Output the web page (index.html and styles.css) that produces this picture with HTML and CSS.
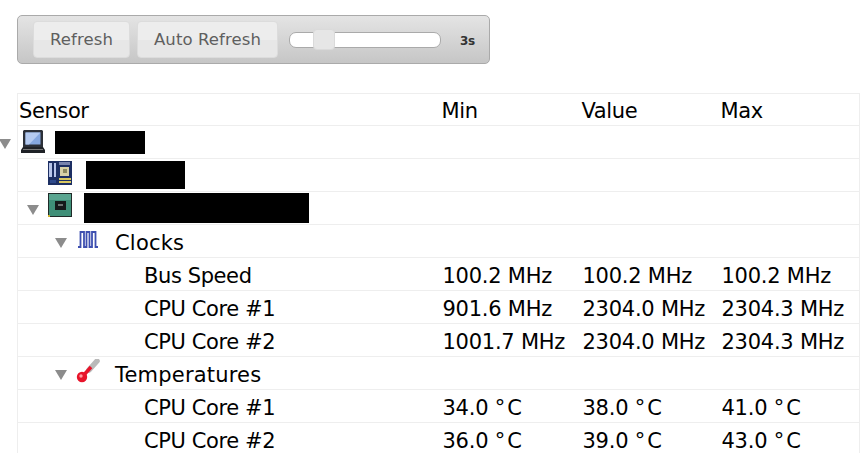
FILE: index.html
```html
<!DOCTYPE html>
<html lang="en">
<head>
<meta charset="utf-8">
<title>Sensors</title>
<link rel="stylesheet" href="styles.css">
</head>
<body>
<div class="toolbar">
  <button class="btn btn-refresh">Refresh</button>
  <button class="btn btn-auto">Auto Refresh</button>
  <div class="slider"><span class="handle"></span></div>
  <span class="interval">3s</span>
</div>
<table class="sensors">
  <colgroup><col class="c-name"><col class="c-min"><col class="c-val"><col class="c-max"></colgroup>
  <thead>
    <tr><th>Sensor</th><th>Min</th><th>Value</th><th>Max</th></tr>
  </thead>
  <tbody>
    <tr><td class="tree" colspan="4"><div class="node l0">
      <svg class="tri" viewBox="0 0 12 10"><path d="M0 0H12L6 10Z"/></svg>
      <svg class="ico laptop" viewBox="0 0 24 24"><path d="M3 0h18l1 1v16H2V1z" fill="#2c3038"/><path d="M4.500 2.500h15v12h-15z" fill="#86a8e0"/><path d="M4.500 2.500h15L8 14.500H4.500z" fill="#b4caf0"/><path d="M2 17h20l2 3v3H0v-3z" fill="#1f2227"/><path d="M2 19h20v1H2z" fill="#7a7a7a"/></svg>
      <span class="redact r1"></span>
    </div></td></tr>
    <tr><td class="tree" colspan="4"><div class="node l1">
      <svg class="ico board" viewBox="0 0 24 24"><path d="M0 0h24v24H0z" fill="#1d2f63"/><path d="M1 2h3v14H1zM6 2h2v14H6z" fill="#b9c6ea"/><path d="M11 1h11v3H11z" fill="#7884ad"/><path d="M12 6h9v9h-9z" fill="#d8d2a8"/><path d="M15 8h4v4h-4z" fill="#8d8a60"/><path d="M11 17h12v2H11zM11 20h12v2H11z" fill="#d9c860"/><path d="M2 19h6v3H2z" fill="#2e4a8c"/></svg>
      <span class="redact r2"></span>
    </div></td></tr>
    <tr><td class="tree" colspan="4"><div class="node l1b">
      <svg class="tri" viewBox="0 0 12 10"><path d="M0 0H12L6 10Z"/></svg>
      <svg class="ico chip" viewBox="0 0 24 24"><path d="M0 0h24v24H0z" fill="#1f2a28"/><path d="M1 1h22v22H1z" fill="#3f8f78"/><path d="M1 1h22v6H1z" fill="#5aa590"/><path d="M7 8h11v9H7z" fill="#15191a"/><path d="M10 11h5v2h-5z" fill="#6b7270"/><path d="M0 22h2v2H0z" fill="#c8b030"/></svg>
      <span class="redact r3"></span>
    </div></td></tr>
    <tr><td class="tree" colspan="4"><div class="node l2">
      <svg class="tri" viewBox="0 0 12 10"><path d="M0 0H12L6 10Z"/></svg>
      <svg class="ico wave" viewBox="0 0 20 18"><path d="M0 16.500H2.500V1.500H6V16.500H8.500V1.500H11.500V16.500H14V1.500H17.500V16.500H20" fill="none" stroke="#3d4fb0" stroke-width="1.800"/></svg>
      <span class="label">Clocks</span>
    </div></td></tr>
    <tr><td class="leaf">Bus Speed</td><td>100.2 MHz</td><td>100.2 MHz</td><td>100.2 MHz</td></tr>
    <tr><td class="leaf">CPU Core #1</td><td>901.6 MHz</td><td>2304.0 MHz</td><td>2304.3 MHz</td></tr>
    <tr><td class="leaf">CPU Core #2</td><td>1001.7 MHz</td><td>2304.0 MHz</td><td>2304.3 MHz</td></tr>
    <tr><td class="tree" colspan="4"><div class="node l2">
      <svg class="tri" viewBox="0 0 12 10"><path d="M0 0H12L6 10Z"/></svg>
      <svg class="ico therm" viewBox="0 0 24 24"><path d="M13 11L21 2" stroke="#b9b9b9" stroke-width="5.500" stroke-linecap="round"/><path d="M7 17L15 8" stroke="#e8142a" stroke-width="3.500"/><circle cx="6" cy="18" r="5.200" fill="#e8142a"/><circle cx="5" cy="17" r="1.700" fill="#ff9aa0"/></svg>
      <span class="label">Temperatures</span>
    </div></td></tr>
    <tr><td class="leaf">CPU Core #1</td><td>34.0 <span class="deg">°</span>C</td><td>38.0 <span class="deg">°</span>C</td><td>41.0 <span class="deg">°</span>C</td></tr>
    <tr><td class="leaf">CPU Core #2</td><td>36.0 <span class="deg">°</span>C</td><td>39.0 <span class="deg">°</span>C</td><td>43.0 <span class="deg">°</span>C</td></tr>
  </tbody>
</table>
</body>
</html>
```

FILE: styles.css
```css
html, body { margin: 0; height: 453px; overflow: hidden; background: #fff; }
body { padding: 15px 0 0 17px; box-sizing: border-box; font-family: "DejaVu Sans", sans-serif; }

.toolbar {
  width: 473px; height: 49px; box-sizing: border-box;
  display: flex; align-items: center;
  padding-left: 15px;
  border: 1px solid #aaa; border-radius: 5px;
  background: linear-gradient(#e4e4e4, #c6c6c6);
}
.btn {
  height: 37px; padding: 0; margin-right: 7px;
  border: 1px solid #dcdcdc; border-radius: 4px;
  background: linear-gradient(#ededed 50%, #e7e7e7 50%);
  color: #5f5f5f; font: 16.5px "DejaVu Sans", sans-serif; letter-spacing: .1px;
}
.btn-refresh { width: 97px; }
.btn-auto { width: 141px; }
.slider {
  width: 152px; height: 16px; margin-left: 4px; box-sizing: border-box;
  display: flex; align-items: center; padding-left: 23px;
  border: 1px solid #aaa; border-radius: 7px; background: #fff;
}
.handle {
  width: 22px; height: 21px; flex: none; box-sizing: border-box;
  border: 1px solid #dadada; border-radius: 4px; background: #e6e6e6;
}
.interval { margin-left: 19px; margin-top: 3px; font-size: 12px; font-weight: bold; color: #333; letter-spacing: -.3px; }

.sensors {
  width: 842px; margin-top: 29px; table-layout: fixed;
  border-collapse: collapse; border: 1px solid #eee;
  font-size: 21px; color: #000; letter-spacing: -.25px;
}
.c-name { width: 423px; } .c-min { width: 140px; } .c-val { width: 139px; } .c-max { width: 140px; }
tr { height: 33px; border-bottom: 1px solid #eee; }
thead tr { height: 32px; }
th { font-weight: normal; text-align: left; padding: 2px 0 0 1px; letter-spacing: -.4px; }
td { padding: 3px 0 0 2px; white-space: nowrap; }
td.leaf { padding-left: 126px; letter-spacing: -.4px; }
td.tree { padding: 0; }
.deg { letter-spacing: 2px; }

.node { display: flex; align-items: center; height: 32px; }
.l0 { margin-left: -17px; }
.l1 { padding-left: 30px; }
.l1b { padding-left: 8px; }
.l2 { padding-left: 36px; }
.tri { width: 14px; height: 10px; flex: none; fill: #8c8c8c; margin-top: 4px; }
.ico { width: 24px; height: 24px; flex: none; }
.redact { background: #000; flex: none; }
.r1 { width: 90px; height: 23px; margin-left: 10px; }
.r2 { width: 99px; height: 28px; margin-left: 14px; margin-top: 0; }
.r3 { width: 225px; height: 30px; margin-left: 12px; margin-top: 0; }
.l0 .tri { margin-right: 9px; margin-left: -3px; }
.board { margin-top: -4px; }
.l1b .tri { margin-right: 8px; }
.l1b .ico { margin-top: -6px; }
.l2 .tri { margin-right: 10px; }
.wave { width: 20px; height: 19px; margin-top: -4px; margin-right: 2px; }
.therm { margin-top: -4px; margin-left: -2px; }
.label { margin-left: 15px; padding-top: 3px; letter-spacing: .2px; }
```
